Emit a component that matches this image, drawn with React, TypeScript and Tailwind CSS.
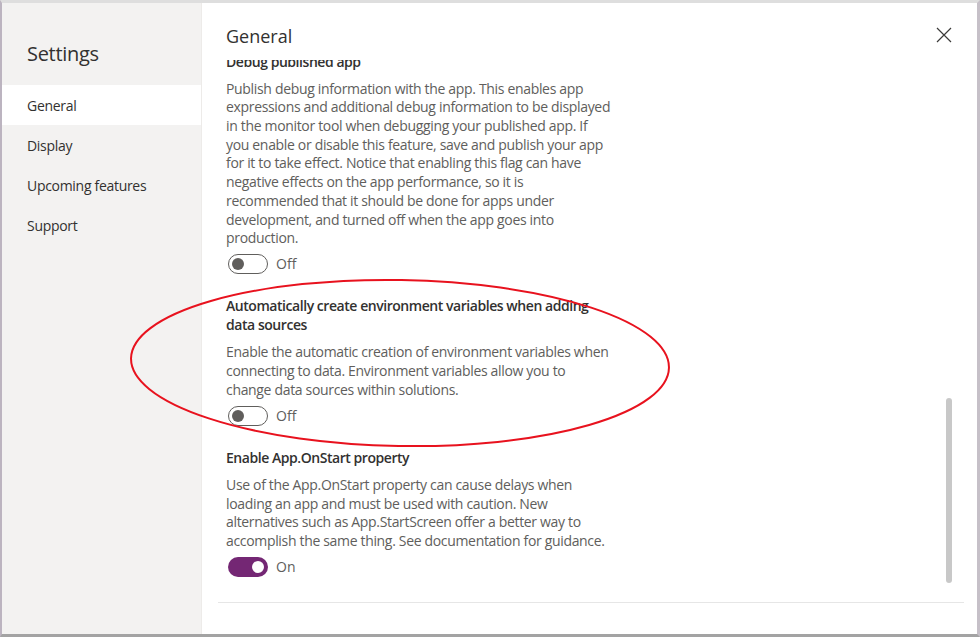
import React from "react";

function Toggle({ on }: { on: boolean }) {
  return (
    <div className="flex items-center h-[20px] ml-[2px]">
      {on ? (
        <div className="w-[40px] h-[20px] rounded-full bg-[#742774] flex items-center justify-end pr-[4px]">
          <div className="w-[12px] h-[12px] rounded-full bg-white" />
        </div>
      ) : (
        <div className="w-[40px] h-[20px] rounded-full border border-[#605e5c] bg-white flex items-center pl-[3px]">
          <div className="w-[12px] h-[12px] rounded-full bg-[#605e5c]" />
        </div>
      )}
      <span className="ml-[8px] text-[14px] text-[#605e5c] leading-[20px]">{on ? "On" : "Off"}</span>
    </div>
  );
}

function Section({
  title,
  lines,
  on,
  first,
}: {
  title: React.ReactNode;
  lines: string[];
  on: boolean;
  first?: boolean;
}) {
  return (
    <div className={first ? "" : "mt-[23px]"}>
      <div className="text-[14px] leading-[18.6px] font-semibold text-[#323130] tracking-[-0.45px] whitespace-nowrap">
        {title}
      </div>
      <div className="mt-[8.5px] text-[14px] leading-[18.7px] text-[#605e5c] tracking-[-0.33px]">
        {lines.map((l, i) => (
          <div key={i} className="whitespace-nowrap">
            {l}
          </div>
        ))}
      </div>
      <div className="mt-[6.5px]">
        <Toggle on={on} />
      </div>
    </div>
  );
}

export default function App() {
  return (
    <div
      className="relative w-[980px] h-[637px] overflow-hidden border-t-[3px] border-t-[#dedede] border-b-[3px] border-b-[#a3a3a3] border-l-[2px] border-l-[#bcb4c0] border-r-[3px] border-r-[#c6c0c8] bg-white"
      style={{ fontFamily: "'Open Sans', 'Noto Sans', sans-serif" }}
    >
      <div className="flex h-full bg-white">
        <aside className="w-[200px] shrink-0 bg-[#f3f2f1] border-r border-[#edebe9] tracking-[-0.3px]">
          <div className="pt-[37px] pl-[25px] text-[20px] leading-[28px] text-[#323130]">Settings</div>
          <nav className="mt-[17px] flex flex-col">
            <div className="h-[40px] flex items-center pl-[25px] bg-white text-[14px] text-[#323130]">General</div>
            <div className="h-[40px] flex items-center pl-[25px] text-[14px] text-[#323130]">Display</div>
            <div className="h-[40px] flex items-center pl-[25px] text-[14px] text-[#323130]">Upcoming features</div>
            <div className="h-[40px] flex items-center pl-[25px] text-[14px] text-[#323130]">Support</div>
          </nav>
        </aside>
        <main className="relative flex-1 flex flex-col">
          <div className="h-[57px] shrink-0 flex items-start justify-between pl-[24px] pr-[24px] pt-[21px]">
            <div className="text-[18px] leading-[24px] text-[#323130]">General</div>
            <svg width="16" height="16" viewBox="0 0 16 16" className="mt-[3px] mr-[1px]">
              <path d="M1 1 L15 15 M15 1 L1 15" stroke="#3b3a39" strokeWidth="1.2" fill="none" />
            </svg>
          </div>
          <div className="flex-1 overflow-hidden pl-[24px]">
            <div className="-mt-[7.5px]">
              <Section
                first
                title="Debug published app"
                on={false}
                lines={[
                  "Publish debug information with the app. This enables app",
                  "expressions and additional debug information to be displayed",
                  "in the monitor tool when debugging your published app. If",
                  "you enable or disable this feature, save and publish your app",
                  "for it to take effect. Notice that enabling this flag can have",
                  "negative effects on the app performance, so it is",
                  "recommended that it should be done for apps under",
                  "development, and turned off when the app goes into",
                  "production.",
                ]}
              />
              <Section
                title={
                  <>
                    Automatically create environment variables when adding
                    <br />
                    data sources
                  </>
                }
                on={false}
                lines={[
                  "Enable the automatic creation of environment variables when",
                  "connecting to data. Environment variables allow you to",
                  "change data sources within solutions.",
                ]}
              />
              <Section
                title="Enable App.OnStart property"
                on={true}
                lines={[
                  "Use of the App.OnStart property can cause delays when",
                  "loading an app and must be used with caution. New",
                  "alternatives such as App.StartScreen offer a better way to",
                  "accomplish the same thing. See documentation for guidance.",
                ]}
              />
            </div>
          </div>
          <div className="shrink-0 h-[32px] pl-[16px] pr-[13px]">
            <div className="h-px bg-[#e6e6e6]" />
          </div>
          <div className="absolute left-[744px] top-[395px] w-[6px] h-[185px] rounded-full bg-[#c8c8c8]" />
        </main>
      </div>
      <svg
        className="absolute pointer-events-none"
        style={{ left: -2, top: -3 }}
        width="980"
        height="637"
        viewBox="0 0 980 637"
      >
        <ellipse
          cx="400"
          cy="363"
          rx="269"
          ry="83"
          transform="rotate(1 400 363)"
          fill="none"
          stroke="#e8121e"
          strokeWidth="2"
        />
      </svg>
    </div>
  );
}
